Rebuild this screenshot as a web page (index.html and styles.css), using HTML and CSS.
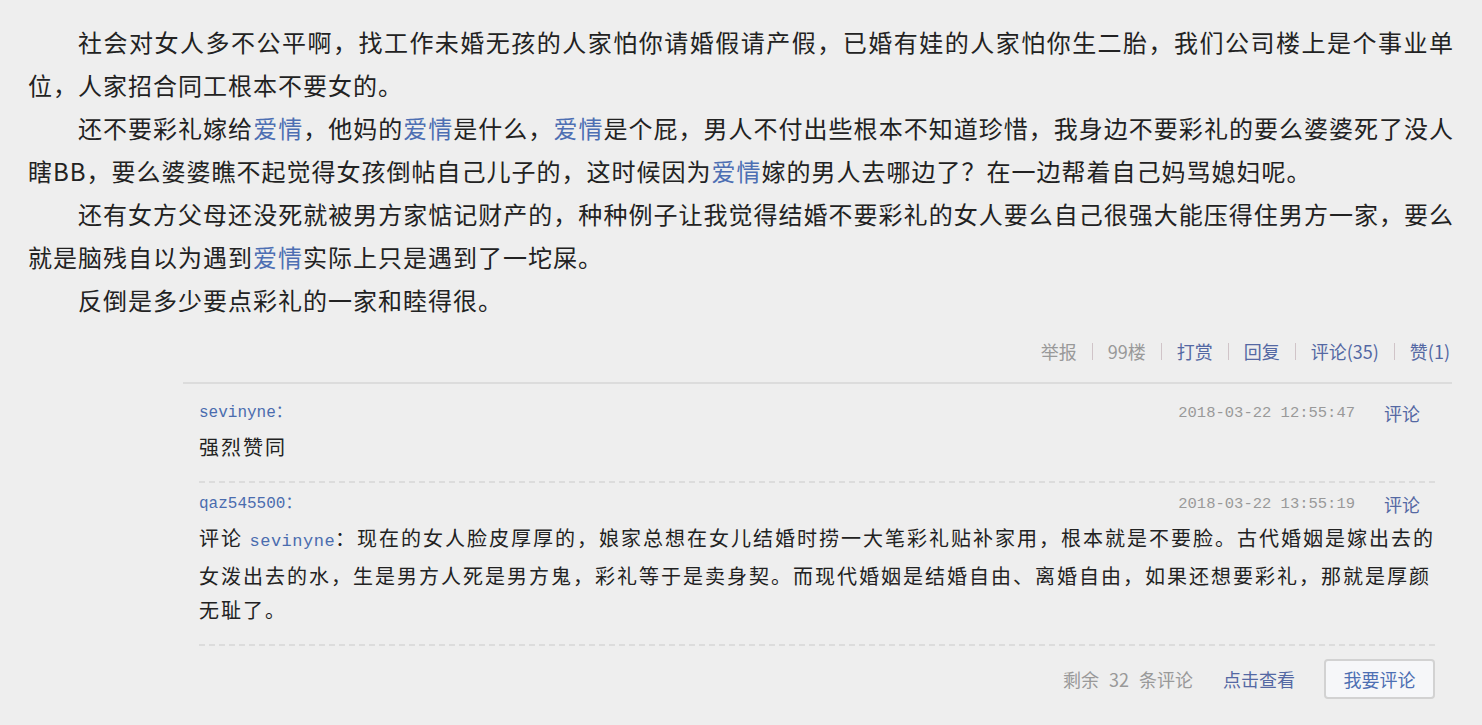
FILE: index.html
```html
<!DOCTYPE html>
<html lang="zh-CN">
<head>
<meta charset="UTF-8" />
<meta name="viewport" content="width=device-width, initial-scale=1" />
<title>99楼 - 评论</title>
<link rel="stylesheet" href="styles.css">
</head>
<body>

<div class="post">
  <div class="post-content">
    <p>社会对女人多不公平啊，找工作未婚无孩的人家怕你请婚假请产假，已婚有娃的人家怕你生二胎，我们公司楼上是个事业单位，人家招合同工根本不要女的。</p>
    <p>还不要彩礼嫁给<a href="#">爱情</a>，他妈的<a href="#">爱情</a>是什么，<a href="#">爱情</a>是个屁，男人不付出些根本不知道珍惜，我身边不要彩礼的要么婆婆死了没人瞎BB，要么婆婆瞧不起觉得女孩倒帖自己儿子的，这时候因为<a href="#">爱情</a>嫁的男人去哪边了？在一边帮着自己妈骂媳妇呢。</p>
    <p>还有女方父母还没死就被男方家惦记财产的，种种例子让我觉得结婚不要彩礼的女人要么自己很强大能压得住男方一家，要么就是脑残自以为遇到<a href="#">爱情</a>实际上只是遇到了一坨屎。</p>
    <p>反倒是多少要点彩礼的一家和睦得很。</p>
  </div>

  <!-- 楼层操作 -->
  <div class="post-actions">
    <a href="#" class="muted">举报</a><span class="sep"></span>
    <span class="muted">99楼</span><span class="sep"></span>
    <a href="#">打赏</a><span class="sep"></span>
    <a href="#">回复</a><span class="sep"></span>
    <a href="#">评论(35)</a><span class="sep"></span>
    <a href="#">赞(1)</a>
  </div>

  <!-- 楼中评论 -->
  <div class="comments">
    <div class="comment">
      <div class="comment-head">
        <a href="#" class="user">sevinyne：</a>
        <span class="meta">
          <span class="time">2018-03-22 12:55:47</span>
          <a href="#">评论</a>
        </span>
      </div>
      <div class="comment-text">强烈赞同</div>
    </div>
    <div class="comment">
      <div class="comment-head">
        <a href="#" class="user">qaz545500：</a>
        <span class="meta">
          <span class="time">2018-03-22 13:55:19</span>
          <a href="#">评论</a>
        </span>
      </div>
      <div class="comment-text">评论 <a href="#" class="mention">sevinyne</a>：现在的女人脸皮厚厚的，娘家总想在女儿结婚时捞一大笔彩礼贴补家用，根本就是不要脸。古代婚姻是嫁出去的女泼出去的水，生是男方人死是男方鬼，彩礼等于是卖身契。而现代婚姻是结婚自由、离婚自由，如果还想要彩礼，那就是厚颜无耻了。</div>
    </div>

    <div class="comment-foot">
      <span class="remain">剩余<span class="num">32</span>条评论</span>
      <a href="#" class="more">点击查看</a>
      <button type="button" class="btn-comment">我要评论</button>
    </div>
  </div>
</div>

</body>
</html>
```

FILE: styles.css
```css
body {
  margin: 0;
  background: #eeeeee;
  color: #222;
  font-family: "Noto Sans CJK SC", sans-serif;
}
a { text-decoration: none; color: #4d6fb3; }

.post { padding: 20px 28px 0 28px; }

.post-content p {
  margin: 0;
  font-size: 24px;
  letter-spacing: 1px;
  line-height: 43px;
  text-indent: 50px;
  text-align: justify;
}

.post-actions {
  margin-top: 15px;
  padding-right: 4px;
  display: flex;
  justify-content: flex-end;
  align-items: center;
  font-size: 18px;
  line-height: 30px;
}
.post-actions a { color: #5468a3; }
.post-actions .muted { color: #999; }
.post-actions .sep {
  width: 1px;
  height: 17px;
  margin: 0 15px;
  background: #d0c4c8;
}

.comments {
  margin: 16px 2px 0 155px;
  padding: 8px 17px 0 16px;
  border-top: 2px solid #dcdcdc;
}
.comment {
  padding: 9px 0 17px;
  border-bottom: 2px dashed #dcdcdc;
}
.comment-head {
  display: flex;
  justify-content: space-between;
  align-items: center;
  line-height: 24px;
}
.comment-head .user {
  font-family: "Liberation Mono", "Noto Sans CJK SC", monospace;
  font-size: 16px;
  color: #4a6cae;
}
.comment-head .meta {
  display: flex;
  align-items: center;
  gap: 29px;
  margin-right: 15px;
}
.comment-head .time {
  font-family: "Liberation Mono", monospace;
  font-size: 15.5px;
  color: #999;
}
.comment-head .meta a { font-size: 18px; color: #5468a3; }

.comment-text {
  margin-top: 5px;
  margin-right: -4px;
  font-size: 20px;
  letter-spacing: 2px;
  line-height: 34px;
}
.comment-text .mention {
  font-family: "Liberation Mono", monospace;
  font-size: 17px;
  letter-spacing: 0.5px;
  color: #4a6cae;
}

.comment-foot {
  display: flex;
  justify-content: flex-end;
  align-items: center;
  margin-top: 13px;
  font-size: 18px;
}
.comment-foot .remain { color: #999; }
.comment-foot .num { margin: 0 10px; }
.comment-foot .more { margin-left: 30px; color: #5468a3; }
.btn-comment {
  margin-left: 29px;
  width: 111px;
  height: 40px;
  padding: 0;
  background: #f6f7f9;
  border: 2px solid #d2d2d2;
  border-radius: 4px;
  color: #4d6fb3;
  font-family: "Noto Sans CJK SC", sans-serif;
  font-size: 18px;
  cursor: pointer;
}
```
